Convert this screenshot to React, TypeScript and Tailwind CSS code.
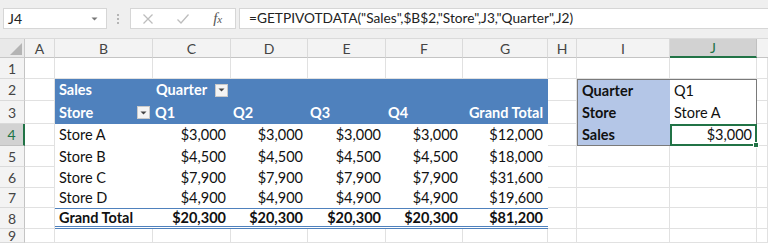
import React from "react";

const cols = ["A", "B", "C", "D", "E", "F", "G", "H", "I", "J", ""];
const rowHeights = [21, 22, 23, 22, 21, 21, 20, 21, 14];

type Cell = {
  text?: string;
  cls?: string;
  node?: React.ReactNode;
  noGrid?: boolean;
};

function Dropdown() {
  return (
    <span className="inline-flex h-[13px] w-[13px] items-center justify-center bg-[#f4f4f4] border border-[#c9c9c9]">
      <svg width="7" height="4" viewBox="0 0 7 4">
        <path d="M0.5 0.5 L6.5 0.5 L3.5 3.5 Z" fill="#444" />
      </svg>
    </span>
  );
}

const blue = "bg-[#4f81bd] text-white font-bold";
const data: Record<string, string[]> = {
  "4": ["Store A", "$3,000", "$3,000", "$3,000", "$3,000", "$12,000"],
  "5": ["Store B", "$4,500", "$4,500", "$4,500", "$4,500", "$18,000"],
  "6": ["Store C", "$7,900", "$7,900", "$7,900", "$7,900", "$31,600"],
  "7": ["Store D", "$4,900", "$4,900", "$4,900", "$4,900", "$19,600"],
  "8": ["Grand Total", "$20,300", "$20,300", "$20,300", "$20,300", "$81,200"],
};

function getCell(r: number, c: number): Cell {
  if (r === 2 || r === 3) {
    if (c >= 1 && c <= 6) {
      if (r === 2) {
        if (c === 1) return { text: "Sales", cls: blue + " pl-[4px]", noGrid: true };
        if (c === 2)
          return {
            cls: blue + " pl-[3px]",
            noGrid: true,
            node: (
              <span className="flex items-center gap-[8px]">
                <span>Quarter</span>
                <Dropdown />
              </span>
            ),
          };
        return { cls: blue, noGrid: true };
      }
      if (c === 1)
        return {
          cls: blue + " pl-[4px] pr-[3px]",
          noGrid: true,
          node: (
            <span className="flex w-full items-center justify-between">
              <span>Store</span>
              <Dropdown />
            </span>
          ),
        };
      if (c === 6) return { text: "Grand Total", cls: blue + " justify-end pr-[5px]", noGrid: true };
      return { text: "Q" + (c - 1), cls: blue + " pl-[2px]", noGrid: true };
    }
  }
  if (r >= 4 && r <= 8 && c >= 1 && c <= 6) {
    const v = data[String(r)][c - 1];
    let cls = c === 1 ? "pl-[4px]" : "justify-end pr-[5px]";
    if (r === 8)
      cls += " font-bold border-t border-t-[#4f81bd] border-b-[3px] border-b-[#4f81bd] border-double";
    return { text: v, cls, noGrid: true };
  }
  if (r >= 2 && r <= 4 && c === 8) {
    const labels = ["Quarter", "Store", "Sales"];
    let cls = "bg-[#b4c6e7] font-bold pl-[4px] border-l border-l-[#7a7a7a]";
    if (r === 2) cls += " border-t border-t-[#7a7a7a]";
    if (r === 4) cls += " border-b border-b-[#7a7a7a]";
    return { text: labels[r - 2], cls, noGrid: true };
  }
  if (r >= 2 && r <= 4 && c === 9) {
    if (r === 4) {
      return {
        cls: "relative justify-end pr-[3px] border-2 border-[#217346] bg-white",
        noGrid: true,
        node: (
          <>
            <span>$3,000</span>
            <span className="absolute -right-[4px] -bottom-[4px] h-[6px] w-[6px] bg-[#217346] border border-white" />
          </>
        ),
      };
    }
    let cls = "pl-[4px] border-r border-r-[#7a7a7a]";
    if (r === 2) cls += " border-t border-t-[#7a7a7a]";
    return { text: r === 2 ? "Q1" : "Store A", cls, noGrid: true };
  }
  return {};
}

export default function App() {
  return (
    <div
      className="w-[768px] h-[243px] overflow-hidden bg-white text-[#111]"
      style={{ fontFamily: "Lato, 'Open Sans', sans-serif" }}
    >
      {/* formula bar */}
      <div className="h-[39px] bg-[#efefef] flex items-start pt-[8px] pl-[3px] border-b border-[#dadada]">
        <div className="h-[21px] w-[104px] bg-white border border-[#d6d6d6] flex items-center justify-between pl-[4px] pr-[8px] text-[14px] text-[#222]">
          <span>J4</span>
          <svg width="7" height="4" viewBox="0 0 7 4">
            <path d="M0.5 0.5 L6.5 0.5 L3.5 3.5 Z" fill="#777" />
          </svg>
        </div>
        <div className="w-[22px] h-[21px] flex flex-col items-center justify-center gap-[2px]">
          <span className="block w-[2px] h-[2px] bg-[#b5b5b5]" />
          <span className="block w-[2px] h-[2px] bg-[#b5b5b5]" />
          <span className="block w-[2px] h-[2px] bg-[#b5b5b5]" />
        </div>
        <div className="ml-[1px] h-[21px] w-[106px] bg-white border border-[#d6d6d6] flex items-center">
          <span className="w-[35px] flex justify-center">
            <svg width="12" height="12" viewBox="0 0 12 12">
              <path d="M1.5 1.5 L10.5 10.5 M10.5 1.5 L1.5 10.5" stroke="#bdbdbd" strokeWidth="1.3" />
            </svg>
          </span>
          <span className="w-[35px] flex justify-center">
            <svg width="14" height="12" viewBox="0 0 14 12">
              <path d="M1.5 6.5 L5 10 L12.5 1.5" stroke="#bdbdbd" strokeWidth="1.3" fill="none" />
            </svg>
          </span>
          <span
            className="w-[35px] flex justify-center text-[15px] italic text-[#555]"
            style={{ fontFamily: "'Liberation Serif', serif" }}
          >
            f<span className="text-[11px] mt-[4px]">x</span>
          </span>
        </div>
        <div className="ml-[3px] h-[21px] flex-1 bg-white border border-[#d6d6d6] border-r-0 flex items-center pl-[9px] text-[13.7px] text-[#222]">
          =GETPIVOTDATA("Sales",$B$2,"Store",J3,"Quarter",J2)
        </div>
      </div>

      {/* grid */}
      <div
        className="grid text-[14.5px]"
        style={{
          gridTemplateColumns: "25px 30px 98px 78px 77px 78px 77px 85px 29px 93px 87px 1fr",
          gridTemplateRows: "19px " + rowHeights.map((h) => h + "px").join(" "),
        }}
      >
        <div className="bg-[#e9e9e9] border-r border-b border-[#c8c8c8] relative">
          <svg className="absolute right-[2px] bottom-[2px]" width="12" height="12" viewBox="0 0 12 12">
            <path d="M12 0 L12 12 L0 12 Z" fill="#b4b4b4" />
          </svg>
        </div>
        {cols.map((c, i) => (
          <div
            key={"h" + i}
            className={
              "flex items-center justify-center text-[14px] " +
              (c === "J"
                ? "bg-[#d2d2d2] text-[#217346] border-b-2 border-b-[#217346] border-r border-r-[#c0c0c0]"
                : "bg-[#f3f3f3] text-[#444] border-b border-b-[#c4c4c4] " +
                  (c === "" ? "" : "border-r border-r-[#dadada]"))
            }
          >
            {c}
          </div>
        ))}
        {rowHeights.map((_, ri) => {
          const r = ri + 1;
          return (
            <React.Fragment key={"r" + r}>
              <div
                className={
                  "flex items-center justify-center text-[14px] border-b " +
                  (r === 4
                    ? "bg-[#d2d2d2] text-[#217346] border-b-[#c0c0c0] border-r-2 border-r-[#217346]"
                    : "bg-[#f3f3f3] text-[#444] border-b-[#dadada] border-r border-r-[#c4c4c4]")
                }
              >
                {r}
              </div>
              {cols.map((_, ci) => {
                const cell = getCell(r, ci);
                const base = "flex items-center whitespace-nowrap overflow-visible";
                const grid = cell.noGrid ? "" : " border-r border-b border-[#e1e1e1]";
                return (
                  <div key={"c" + r + "-" + ci} className={base + grid + " " + (cell.cls ?? "")}>
                    {cell.node ?? cell.text}
                  </div>
                );
              })}
            </React.Fragment>
          );
        })}
      </div>
    </div>
  );
}
